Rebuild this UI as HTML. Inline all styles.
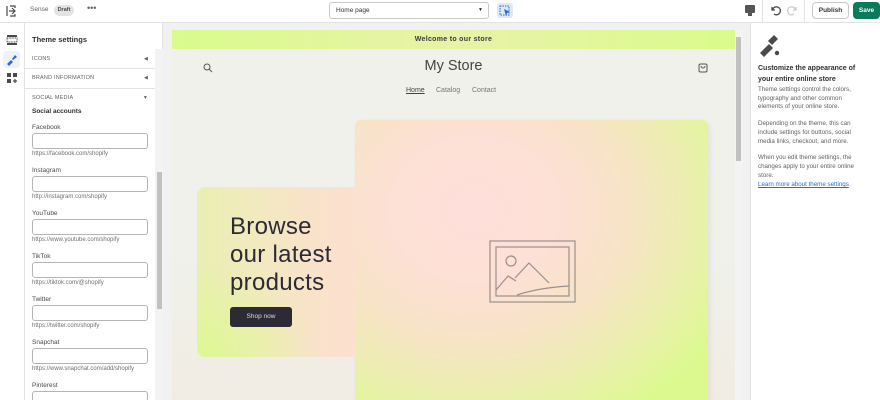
<!DOCTYPE html>
<html><head><meta charset="utf-8"><style>
*{box-sizing:border-box;margin:0;padding:0}
html,body{width:880px;height:400px;overflow:hidden}
body{font-family:"Liberation Sans",sans-serif;background:#f1f1f1;position:relative;color:#303030}
.abs{position:absolute}
.top{left:0;top:0;width:880px;height:23px;background:#fff;border-bottom:1px solid #e3e3e3}
.rail{left:0;top:23px;width:25px;height:377px;background:#fff;border-right:1px solid #e3e3e3}
.lp{left:25px;top:23px;width:138px;height:377px;background:#fff;border-right:1px solid #e3e3e3}
.sec{position:absolute;left:0;width:116px;font-size:5.5px;color:#616161;letter-spacing:.2px}
.lbl{position:absolute;left:7px;font-size:6.5px;color:#4a4a4a}
.inp{position:absolute;left:7px;width:116px;height:16px;border:1px solid #b5b5b5;border-radius:3px;background:#fff}
.hlp{position:absolute;left:7px;font-size:6px;color:#707070}
.rp{left:750px;top:23px;width:130px;height:377px;background:#fff;border-left:1px solid #e3e3e3}
.rp p{font-size:6.2px;color:#616161;line-height:8.7px}
</style></head><body>
<div class="abs top">
 <svg class="abs" style="left:5px;top:5px" width="12" height="12" viewBox="0 0 12 12" fill="none" stroke="#4a4a4a" stroke-width="1.2"><path d="M2 1v10M4 6h6M7 3l3 3-3 3"/><path d="M5 1h5v2M5 11h5V9"/></svg>
 <div class="abs" style="left:30px;top:6px;font-size:6.5px;color:#616161">Sense</div>
 <div class="abs" style="left:54px;top:5px;width:20px;height:11px;border-radius:6px;background:#e3e3e3;font-size:5.5px;color:#4a4a4a;text-align:center;line-height:11px;font-weight:bold">Draft</div>
 <div class="abs" style="left:87px;top:3px;font-size:9px;color:#616161">•••</div>
 <div class="abs" style="left:329px;top:2px;width:160px;height:17px;border:1px solid #c9c9c9;border-radius:3px;font-size:6.5px;padding:4px 6px">Home page<span style="position:absolute;right:5px;top:4px;font-size:5px">▼</span></div>
 <div class="abs" style="left:497px;top:3px;width:16px;height:15px;background:#dfe8f7;border-radius:3px"><svg width="16" height="15" viewBox="0 0 16 15"><rect x="3" y="3" width="9" height="9" fill="none" stroke="#2c6ecb" stroke-dasharray="1.5 1"/><path d="M7 6l6 3-3 1-1 3z" fill="#2c6ecb"/></svg></div>
 <div class="abs" style="left:745px;top:5px;width:10px;height:8px;background:#555;border-radius:1px"></div>
 <div class="abs" style="left:748px;top:13px;width:4px;height:3px;background:#555"></div>
 <div class="abs" style="left:762px;top:0;width:1px;height:23px;background:#e3e3e3"></div>
 <svg class="abs" style="left:769px;top:4px" width="30" height="13" viewBox="0 0 30 13" fill="none" stroke-width="1.3"><path d="M3 3v3h3M3.5 6A4 4 0 1 1 5 10" stroke="#4a4a4a"/><path d="M27 3v3h-3M26.5 6A4 4 0 1 0 25 10" stroke="#ccc"/></svg>
 <div class="abs" style="left:804px;top:0;width:1px;height:23px;background:#e3e3e3"></div>
 <div class="abs" style="left:812px;top:2px;width:37px;height:17px;border:1px solid #c9c9c9;border-radius:4px;font-size:6.5px;font-weight:bold;text-align:center;line-height:15px">Publish</div>
 <div class="abs" style="left:853px;top:2px;width:27px;height:17px;background:#0b7a5c;border-radius:4px;font-size:6.5px;font-weight:bold;color:#fff;text-align:center;line-height:17px">Save</div>
</div>
<div class="abs rail">
 <svg class="abs" style="left:6px;top:11px" width="12" height="12" viewBox="0 0 12 12" fill="#4a4a4a"><rect x="1" y="1" width="10" height="2"/><rect x="1" y="4" width="10" height="4" fill="none" stroke="#4a4a4a" stroke-dasharray="1 .6"/><rect x="1" y="9" width="10" height="2"/></svg>
 <div class="abs" style="left:3px;top:28px;width:17px;height:17px;background:#eef1f6;border-radius:4px"></div>
 <svg class="abs" style="left:6px;top:31px" width="12" height="12" viewBox="0 0 12 12" fill="#2c6ecb"><path d="M1 10l4-4 2 2-4 4zM6 5l3-4 2 2-4 3z"/></svg>
 <svg class="abs" style="left:6px;top:49px" width="12" height="12" viewBox="0 0 12 12" fill="#4a4a4a"><rect x="1" y="1" width="4" height="4"/><rect x="7" y="1" width="4" height="4"/><rect x="1" y="7" width="4" height="4"/><path d="M9 7v4M7 9h4" stroke="#4a4a4a" stroke-width="1.2"/></svg>
</div>
<div class="abs lp">
 <div class="abs" style="left:7px;top:12px;font-size:7.5px;font-weight:bold;color:#303030">Theme settings</div>
 <div class="sec" style="top:33px;left:7px">ICONS<span style="position:absolute;right:0;font-size:5px">◀</span></div>
 <div class="abs" style="left:0;top:45px;width:130px;height:1px;background:#e3e3e3"></div>
 <div class="sec" style="top:52px;left:7px">BRAND INFORMATION<span style="position:absolute;right:0;font-size:5px">◀</span></div>
 <div class="abs" style="left:0;top:65px;width:130px;height:1px;background:#e3e3e3"></div>
 <div class="sec" style="top:72px;left:7px">SOCIAL MEDIA<span style="position:absolute;right:0;font-size:5px">▼</span></div>
 <div class="abs" style="left:7px;top:85px;font-size:6.5px;font-weight:bold">Social accounts</div>
 <div class="lbl" style="top:101px">Facebook</div><div class="inp" style="top:110px"></div><div class="hlp" style="top:128px">https://facebook.com/shopify</div>
 <div class="lbl" style="top:144px">Instagram</div><div class="inp" style="top:153px"></div><div class="hlp" style="top:171px">http://instagram.com/shopify</div>
 <div class="lbl" style="top:187px">YouTube</div><div class="inp" style="top:196px"></div><div class="hlp" style="top:214px">https://www.youtube.com/shopify</div>
 <div class="lbl" style="top:230px">TikTok</div><div class="inp" style="top:239px"></div><div class="hlp" style="top:257px">https://tiktok.com/@shopify</div>
 <div class="lbl" style="top:273px">Twitter</div><div class="inp" style="top:282px"></div><div class="hlp" style="top:300px">https://twitter.com/shopify</div>
 <div class="lbl" style="top:316px">Snapchat</div><div class="inp" style="top:325px"></div><div class="hlp" style="top:343px">https://www.snapchat.com/add/shopify</div>
 <div class="lbl" style="top:359px">Pinterest</div><div class="inp" style="top:368px"></div>
 <div class="abs" style="left:130px;top:26px;width:8px;height:351px;background:#f3f3f3"></div>
 <div class="abs" style="left:132px;top:149px;width:5px;height:137px;background:#c1c1c1"></div>
</div>
<div class="abs" style="left:172px;top:30px;width:563px;height:370px;background:linear-gradient(180deg,#f0f1eb 60%,#f1ece3);overflow:hidden">
 <div class="abs" style="left:0;top:0;width:563px;height:19px;background:linear-gradient(90deg,#d9fb8c,#e8f2a8 50%,#dafb8c);font-size:7px;font-weight:bold;color:#3a3a3a;text-align:center;line-height:19px;letter-spacing:.3px">Welcome to our store</div>
 <svg class="abs" style="left:31px;top:33px" width="10" height="10" viewBox="0 0 10 10" fill="none" stroke="#555" stroke-width="1"><circle cx="4" cy="4" r="3"/><path d="M6.3 6.3L9 9"/></svg>
 <div class="abs" style="left:0;top:28px;width:563px;text-align:center;font-size:14.5px;color:#444">My Store</div>
 <svg class="abs" style="left:526px;top:33px" width="10" height="10" viewBox="0 0 10 10" fill="none" stroke="#555" stroke-width="1"><rect x="1" y="1" width="8" height="8" rx="1.5"/><path d="M3 3a2 2 0 0 0 4 0"/></svg>
 <div class="abs" style="left:234px;top:57px;font-size:7px;color:#444;text-decoration:underline">Home</div>
 <div class="abs" style="left:264px;top:57px;font-size:7px;color:#777">Catalog</div>
 <div class="abs" style="left:300px;top:57px;font-size:7px;color:#777">Contact</div>
 <div class="abs" style="left:183px;top:90px;width:353px;height:290px;border-radius:6px;background:radial-gradient(ellipse 280px 240px at 120px 90px,#ffdfda 0%,#fde0d6 30%,#f7e4c6 55%,#ebefae 78%,#dcf990 100%);box-shadow:2px 2px 6px rgba(0,0,0,.06)"></div>
 <div class="abs" style="left:25px;top:157px;width:158px;height:170px;border-radius:8px 0 0 8px;background:linear-gradient(90deg,#eaefb2 0%,#f1eabe 35%,#f9e2ca 75%,#fce0d0 100%)"></div>
 <div class="abs" style="left:25px;top:157px;width:158px;height:170px;border-radius:8px 0 0 8px;background:radial-gradient(ellipse 120px 90px at 0 170px,rgba(220,249,144,.9),rgba(220,249,144,0))"></div>
 <div class="abs" style="left:58px;top:183px;font-size:24px;line-height:28px;color:#2b2a35;letter-spacing:.3px">Browse<br>our latest<br>products</div>
 <div class="abs" style="left:58px;top:277px;width:62px;height:20px;background:#2b2a35;border-radius:3px;color:#ddd;font-size:6.5px;text-align:center;line-height:20px">Shop now</div>
 <svg class="abs" style="left:317px;top:210px" width="87" height="63" viewBox="0 0 87 63" fill="none" stroke="#9a8f8a" stroke-width="1.2"><rect x="1" y="1" width="85" height="61"/><rect x="7" y="7" width="73" height="49"/><circle cx="22" cy="21" r="5"/><path d="M7 50l12-14 8 5M26 38l14-15 20 20 M28 55c15-5 35-8 52-9"/></svg>
</div>
<div class="abs" style="left:735px;top:30px;width:8px;height:370px;background:#f3f3f3"></div>
<div class="abs" style="left:736px;top:37px;width:5px;height:124px;background:#c1c1c1"></div>
<div class="abs rp">
 <svg class="abs" style="left:7px;top:10px" width="22" height="24" viewBox="0 0 22 24" fill="#4a4a4a"><path d="M2 20l9-9 4 4-9 9z"/><path d="M10 8l6-6 4 4-6 6z" /><circle cx="19" cy="20" r="2.2"/></svg>
 <div class="abs" style="left:7px;top:40px;width:106px;font-size:7px;font-weight:bold;line-height:11px;color:#303030">Customize the appearance of your entire online store</div>
 <div class="abs" style="left:7px;top:63px;width:100px"><p>Theme settings control the colors, typography and other common elements of your online store.</p><p style="margin-top:8px">Depending on the theme, this can include settings for buttons, social media links, checkout, and more.</p><p style="margin-top:8px">When you edit theme settings, the changes apply to your entire online store.</p><p style="color:#2c6ecb;text-decoration:underline;margin-top:1px;white-space:nowrap">Learn more about theme settings</p></div>
</div>
</body></html>
